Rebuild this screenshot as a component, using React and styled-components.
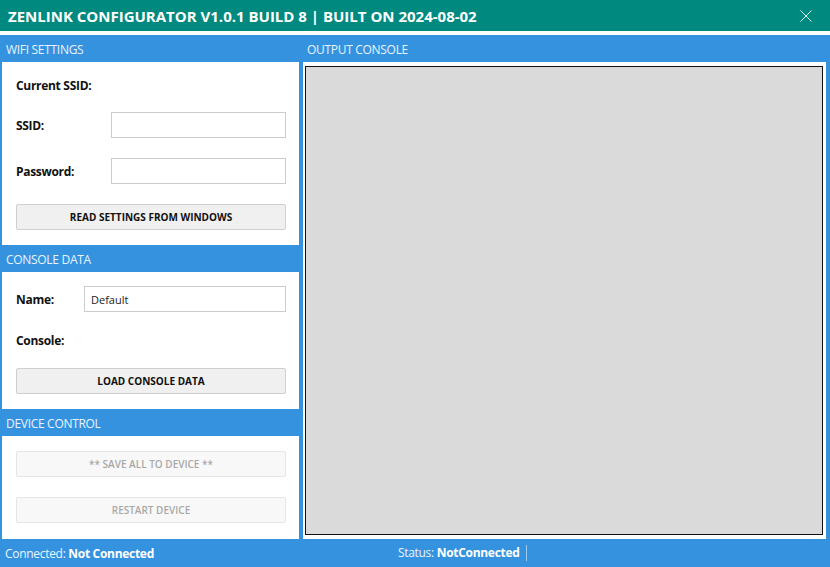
import styled, { createGlobalStyle } from "styled-components";

const GlobalStyle = createGlobalStyle`
    html, body {
        margin: 0;
        padding: 0;
        background: #ffffff;
    }
    body {
        font-family: "Open Sans", "Noto Sans", sans-serif;
    }
`;

const BLUE = "#3592de";
const TEAL = "#00897f";

function App() {
    return (
        <>
            <GlobalStyle />
            <Window>
                <TitleBar>
                    <Title>ZENLINK CONFIGURATOR V1.0.1 BUILD 8 | BUILT ON 2024-08-02</Title>
                    <CloseButton aria-label="close">
                        <svg width="12" height="12" viewBox="0 0 12 12">
                            <path d="M0.5 0.5 L11.5 11.5 M11.5 0.5 L0.5 11.5" stroke="#d8f2ee" strokeWidth="1" fill="none" />
                        </svg>
                    </CloseButton>
                </TitleBar>
                <Body>
                    <Column>
                        <Header>WIFI SETTINGS</Header>
                        <Section $height={183}>
                            <Row $top={12}>
                                <Label>Current SSID:</Label>
                            </Row>
                            <Row $top={16}>
                                <Label $width={95}>SSID:</Label>
                                <Input />
                            </Row>
                            <Row $top={20}>
                                <Label $width={95}>Password:</Label>
                                <Input type="password" />
                            </Row>
                            <Button $top={20}>READ SETTINGS FROM WINDOWS</Button>
                        </Section>
                        <Header>CONSOLE DATA</Header>
                        <Section $height={137}>
                            <Row $top={14}>
                                <Label $width={68}>Name:</Label>
                                <Input defaultValue="Default" />
                            </Row>
                            <Row $top={17}>
                                <Label>Console:</Label>
                            </Row>
                            <Button $top={17}>LOAD CONSOLE DATA</Button>
                        </Section>
                        <Header>DEVICE CONTROL</Header>
                        <Section $grow>
                            <Button $top={15} disabled>** SAVE ALL TO DEVICE **</Button>
                            <Button $top={20} disabled>RESTART DEVICE</Button>
                        </Section>
                    </Column>
                    <Column>
                        <Header>OUTPUT CONSOLE</Header>
                        <ConsoleWrap>
                            <ConsoleBox />
                        </ConsoleWrap>
                    </Column>
                </Body>
                <StatusBar>
                    <StatusItem>Connected: <b>Not Connected</b></StatusItem>
                    <StatusItem $divider>Status: <b>NotConnected</b></StatusItem>
                </StatusBar>
            </Window>
        </>
    );
}

export default App;

const Window = styled.div`
    width: 830px;
    height: 567px;
    display: flex;
    flex-direction: column;
    background: #ffffff;
    overflow: hidden;
`;

const TitleBar = styled.div`
    height: 31px;
    flex: none;
    background: ${TEAL};
    display: flex;
    align-items: center;
    justify-content: space-between;
    padding: 0 18px 0 8px;
    border-bottom: 4px solid #ffffff;
`;

const Title = styled.div`
    color: #ffffff;
    font-size: 15px;
    font-weight: 700;
    margin-top: 1px;
`;

const CloseButton = styled.div`
    display: flex;
    align-items: center;
    margin-top: 1px;
`;

const Body = styled.div`
    flex: 1;
    display: grid;
    grid-template-columns: 297px 1fr;
    column-gap: 4px;
    padding: 0 4px 0 2px;
    background: ${BLUE};
    min-height: 0;
`;

const Column = styled.div`
    display: flex;
    flex-direction: column;
    min-height: 0;
`;

const Header = styled.div`
    height: 27px;
    flex: none;
    display: flex;
    align-items: center;
    padding: 1px 0 0 4px;
    box-sizing: border-box;
    color: #e9f4ff;
    font-size: 12px;
    letter-spacing: -0.3px;
    background: ${BLUE};
`;

const Section = styled.div`
    background: #ffffff;
    display: flex;
    flex-direction: column;
    padding: 0 13px 0 14px;
    box-sizing: border-box;
    ${p => p.$grow ? "flex: 1;" : `height: ${p.$height}px; flex: none;`}
`;

const Row = styled.div`
    display: flex;
    align-items: center;
    min-height: 22px;
    margin-top: ${p => p.$top}px;
`;

const Label = styled.div`
    font-size: 12px;
    font-weight: 700;
    color: #111111;
    letter-spacing: -0.3px;
    ${p => p.$width ? `width: ${p.$width}px; flex: none;` : ""}
`;

const Input = styled.input`
    flex: 1;
    height: 26px;
    box-sizing: border-box;
    border: 1px solid #cccccc;
    padding: 0 6px;
    font-family: "Open Sans", "Noto Sans", sans-serif;
    font-size: 11px;
    color: #222222;
    background: #ffffff;
    outline: none;
`;

const Button = styled.button`
    height: 26px;
    margin-top: ${p => p.$top}px;
    box-sizing: border-box;
    border: 1px solid #cfcfcf;
    border-radius: 2px;
    background: #f0f0f0;
    font-family: "Open Sans", "Noto Sans", sans-serif;
    font-size: 10px;
    font-weight: 700;
    color: #111111;
    padding: 0;
    flex: none;

    &:disabled {
        background: #f8f8f8;
        border-color: #e6e6e6;
        color: #a8a8a8;
        font-weight: 600;
    }
`;

const ConsoleWrap = styled.div`
    flex: 1;
    background: #ffffff;
    padding: 4px 3px 4px 2px;
    display: flex;
    min-height: 0;
`;

const ConsoleBox = styled.div`
    flex: 1;
    background: #dadada;
    border: 1px solid #111111;
`;

const StatusBar = styled.div`
    height: 28px;
    flex: none;
    background: ${BLUE};
    display: flex;
    align-items: center;
    padding-left: 5px;
    color: #eaf4ff;
    font-size: 12px;
    letter-spacing: -0.3px;

    b {
        color: #ffffff;
        font-weight: 700;
    }
`;

const StatusItem = styled.div`
    white-space: nowrap;
    ${p => p.$divider ? `
        margin-left: 244px;
        padding-right: 6px;
        border-right: 1px solid #9fcaef;
        line-height: 16px;
    ` : ""}
`;
